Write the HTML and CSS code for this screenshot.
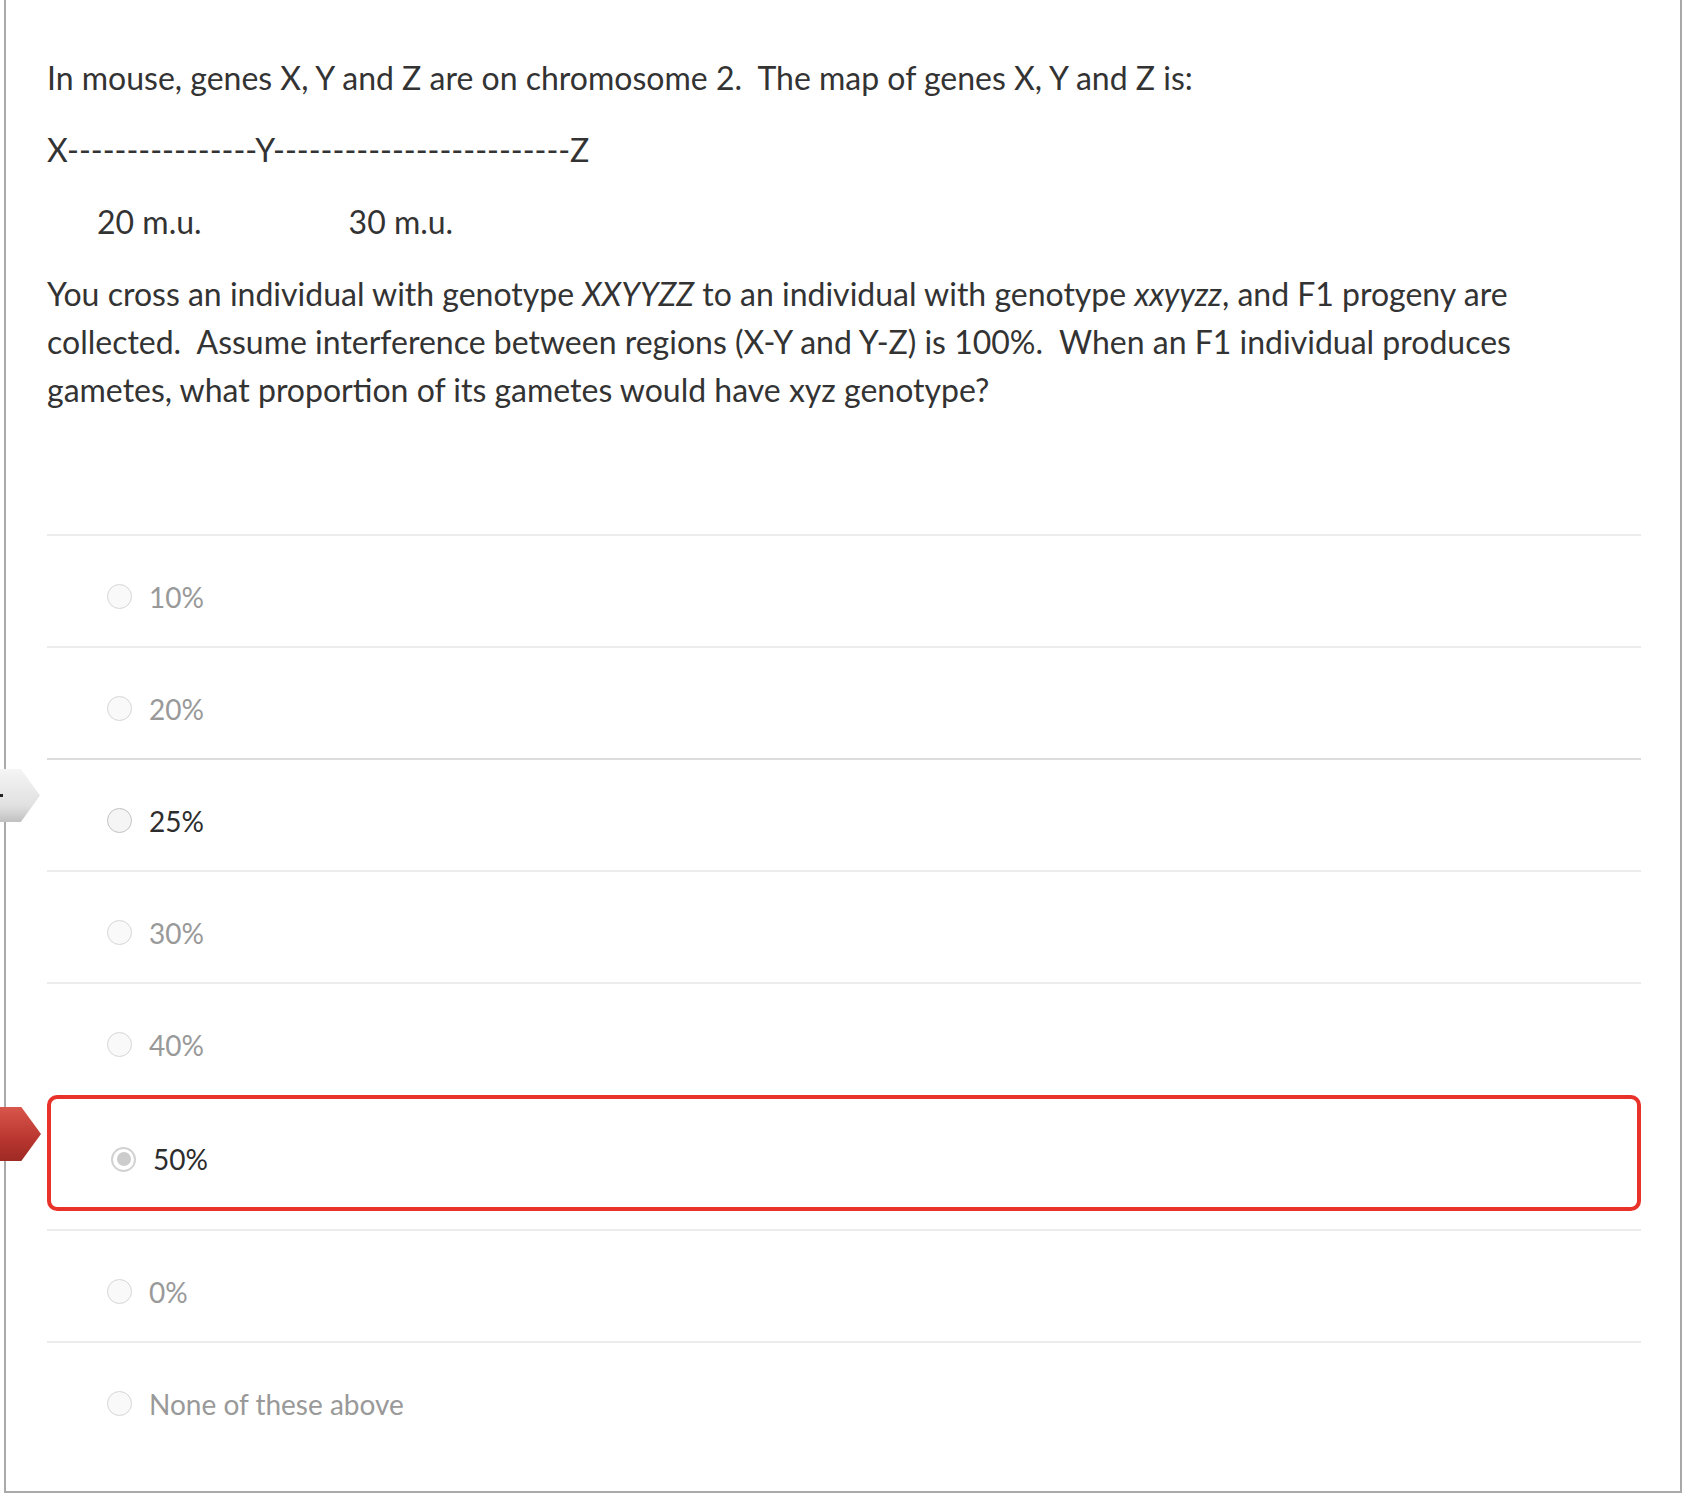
FILE: index.html
```html
<!DOCTYPE html>
<html lang="en">
<head>
<meta charset="utf-8">
<title>Question</title>
<link rel="stylesheet" href="styles.css">
</head>
<body>
<div class="frame">
  <div class="question-text">
    <p>In mouse, genes X, Y and Z are on chromosome 2.&nbsp; The map of genes X, Y and Z is:</p>
    <p>X----------------Y-------------------------Z</p>
    <p><span class="mu1">20 m.u.</span><span class="mu2">30 m.u.</span></p>
    <p>You cross an individual with genotype <em>XXYYZZ</em> to an individual with genotype <em>xxyyzz</em>, and F1 progeny are collected.&nbsp; Assume interference between regions (X-Y and Y-Z) is 100%.&nbsp; When an F1 individual produces gametes, what proportion of its gametes would have xyz genotype?</p>
  </div>
  <div class="answers">
    <div class="answer"><span class="radio"></span><span class="label">10%</span></div>
    <div class="answer"><span class="radio"></span><span class="label">20%</span></div>
    <div class="answer answer-correct"><span class="radio radio-dark"></span><span class="label label-dark">25%</span>
      <span class="marker marker-gray"><span class="marker-dot"></span></span>
    </div>
    <div class="answer"><span class="radio"></span><span class="label">30%</span></div>
    <div class="answer"><span class="radio"></span><span class="label">40%</span></div>
    <div class="answer answer-selected"><span class="radio radio-checked"></span><span class="label label-dark">50%</span>
      <span class="marker marker-red"></span>
    </div>
    <div class="answer answer-after"><span class="radio"></span><span class="label">0%</span></div>
    <div class="answer"><span class="radio"></span><span class="label">None of these above</span></div>
  </div>
</div>
</body>
</html>
```
FILE: styles.css
```css
html, body {
  margin: 0;
  padding: 0;
  background: #ffffff;
}

body {
  font-family: Lato, "Open Sans", "Liberation Sans", sans-serif;
  color: #333333;
}

.frame {
  margin-left: 4px;
  width: 1678px;
  height: 1493px;
  box-sizing: border-box;
  border: 2px solid #a9a9a9;
  border-top: none;
  padding: 54px 39px 0 41px;
  position: relative;
}

.question-text {
  font-size: 32px;
  line-height: 48px;
}

.question-text p {
  margin: 0 0 24px 0;
}

.mu1 {
  padding-left: 50px;
}

.mu2 {
  padding-left: 147px;
}

.answers {
  margin-top: 120px;
  display: flex;
  flex-direction: column;
}

.answer {
  position: relative;
  height: 112px;
  box-sizing: border-box;
  border-top: 2px solid #ececec;
  padding: 11px 0 0 60px;
  display: flex;
  align-items: center;
  font-size: 28px;
  color: #999999;
}

.answer-correct {
  border-top-color: #dcdcdc;
}

.answer-selected {
  height: 116px;
  border: 4px solid #e8322a;
  border-radius: 10px;
  margin: 1px 0 18px 0;
  padding-top: 12px;
}

.radio {
  width: 25px;
  height: 25px;
  box-sizing: border-box;
  border-radius: 50%;
  border: 1.5px solid #d6d6d6;
  background: #f9f9f9;
  flex: none;
  position: relative;
}

.radio-dark {
  border-color: #c2c2c2;
  background: #f5f5f5;
}

.radio-checked {
  border: 2px solid #d2d2d2;
  background: #ffffff;
}

.radio-checked::after {
  content: "";
  position: absolute;
  left: 3.5px;
  top: 3.5px;
  width: 14px;
  height: 14px;
  border-radius: 50%;
  background: #cccccc;
}

.label {
  margin-left: 17px;
  line-height: 40px;
}

.label-dark {
  color: #2d2d2d;
}

.marker {
  position: absolute;
  width: 40px;
  height: 53px;
  clip-path: polygon(0 0, 52% 0, 100% 50%, 52% 100%, 0 100%);
}

.marker-gray {
  left: -47px;
  top: 9px;
  background: linear-gradient(#f5f5f5, #e0e0e0 70%, #c0c0c0);
}

.marker-dot {
  position: absolute;
  left: 0;
  top: 25px;
  width: 3px;
  height: 3px;
  background: #222;
}

.marker-red {
  left: -51px;
  top: 8px;
  width: 41px;
  height: 54px;
  background: linear-gradient(#d9564c, #b8362f 60%, #9e2a24);
}
```
